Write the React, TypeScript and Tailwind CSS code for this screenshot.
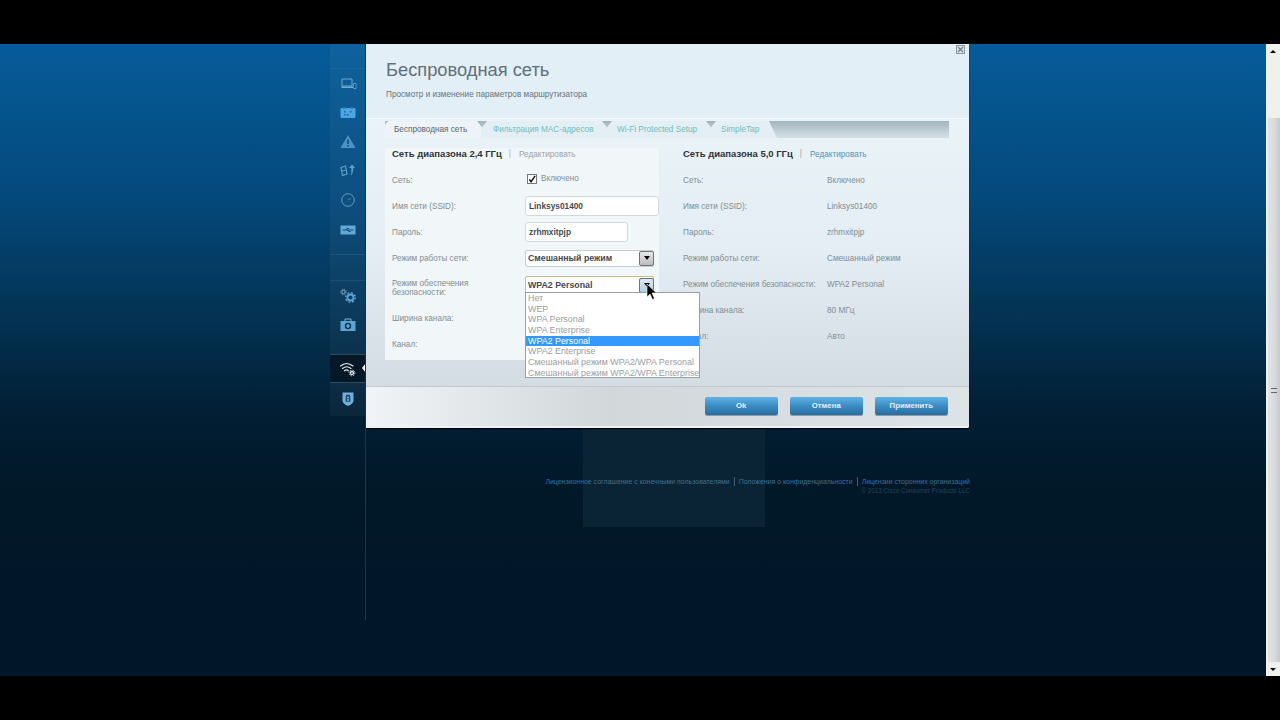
import React from 'react'

const font = { fontFamily: '"Liberation Sans", Arial, sans-serif' }

const Ico: React.FC<{ children: React.ReactNode }> = ({ children }) => (
  <svg width="18" height="18" viewBox="0 0 18 18" fill="#4aa5e2">
    {children}
  </svg>
)

const icons = [
  <Ico key="devices">
    <path d="M3 4h10v7H3z" fill="none" stroke="#6fa9cf" strokeWidth="1" />
    <path d="M1.500 11.500h12.500v1.500H3z" fill="#6fa9cf" />
    <path d="M14.500 8.500h2.500v5h-2.500z" fill="#0c4a7a" stroke="#6fa9cf" strokeWidth="0.800" />
  </Ico>,
  <Ico key="calendar">
    <path d="M1.500 5q0-1 1-1h13q1 0 1 1v8q0 1-1 1h-13q-1 0-1-1z" />
    <path d="M4 3h2.500v2H4zM11.500 3H14v2h-2.500z" fill="#2d79ad" />
    <path d="M5 7h1.500v1.500H5zM11 7h1.500v1.500H11zM8 10h1.500v1.500H8zM5 10h1.500v1.500H5z" fill="#1c639a" />
  </Ico>,
  <Ico key="alert">
    <path d="M9 2l7.500 13h-15z" fill="#4b93c6" />
    <path d="M8.300 6.500h1.400v4.500H8.300zM8.300 12h1.400v1.400H8.300z" fill="#123f63" />
  </Ico>,
  <Ico key="restore">
    <path d="M2 5.500l4.500-1.500 1.500 8-4.500 1.500z" fill="none" stroke="#5f9dc9" strokeWidth="1.200" />
    <path d="M3 9l4-1" stroke="#5f9dc9" strokeWidth="1" />
    <path d="M13 2.500l3.300 3.500h-2c0 3-.500 5.500-2.500 7.500 .6-2.500.8-5 .4-7.500H9.800z" fill="#5f9dc9" />
  </Ico>,
  <Ico key="clock">
    <circle cx="9" cy="9" r="6.300" fill="#0f4f7e" stroke="#5f9dc9" strokeWidth="1" />
    <path d="M9 9l2.500-1.500" stroke="#5f9dc9" strokeWidth="0.800" />
  </Ico>,
  <Ico key="usb">
    <path d="M1.500 4.500h15v9h-15z" fill="#62a9d8" />
    <path d="M3.500 9h11M6.500 9l1.500-1.500h2M8 9l1.500 1.500h2" fill="none" stroke="#134c78" strokeWidth="1" />
  </Ico>,
]

const GearIcon = () => (
  <Ico>
    <circle cx="4.500" cy="5" r="1.700" fill="none" stroke="#7fa8c4" strokeWidth="1" />
    <circle cx="4.500" cy="5" r="2.800" fill="none" stroke="#7fa8c4" strokeWidth="1" strokeDasharray="1.100 1.100" />
    <circle cx="11.500" cy="10.500" r="3" fill="none" stroke="#5aa5d5" strokeWidth="1.800" />
    <circle cx="11.500" cy="10.500" r="4.800" fill="none" stroke="#5aa5d5" strokeWidth="1.500" strokeDasharray="1.900 1.870" />
  </Ico>
)

const CaseIcon = () => (
  <Ico>
    <path d="M1.500 5h15v10h-15z" fill="#5aa5d5" />
    <path d="M6 5V3h6v2" fill="none" stroke="#7db5d8" strokeWidth="1" />
    <circle cx="9" cy="10" r="3.200" fill="#0f3555" />
    <path d="M8.400 8h1.200v1.400H11v1.200H9.600V12H8.400v-1.400H7V9.400h1.400z" fill="#7fc0e6" />
  </Ico>
)

const WifiIcon = () => (
  <svg width="18" height="18" viewBox="0 0 18 18" fill="none" stroke="#e4ecf1" strokeWidth="1.100" strokeLinecap="round">
    <path d="M1.500 6C5 2.800 10 2.800 14 6" />
    <path d="M3.500 8.500C6 6.400 9.500 6.400 12 8.500" />
    <path d="M5.500 10.800c1.300-1 3-1 4 0" />
    <circle cx="13" cy="13" r="1.500" strokeWidth="1.300" />
    <circle cx="13" cy="13" r="2.900" strokeWidth="1" strokeDasharray="1.150 1.150" strokeLinecap="butt" />
  </svg>
)

const ShieldIcon = () => (
  <svg width="18" height="18" viewBox="0 0 18 18">
    <path d="M3.500 2.500h11v8c0 2.500-2.800 4.500-5.500 5.500-2.700-1-5.500-3-5.500-5.500z" fill="#6fb0dc" />
    <path d="M9 4.500a2.300 2.300 0 0 1 2.300 2.300v5H6.700v-5A2.300 2.300 0 0 1 9 4.500z" fill="#1a4568" />
    <circle cx="9" cy="7.500" r="1" fill="#7fc0e6" />
    <circle cx="9" cy="10" r="1" fill="#7fc0e6" />
  </svg>
)

const Sidebar = () => (
  <div className="w-[36px] h-[372px] shrink-0 flex flex-col bg-white/[0.035] rounded-bl-[3px]">
    <div className="h-[25px] border-b border-[#2a6f9f]/60" />
    {icons.map((icon, i) => (
      <div key={i} className="h-[29.2px] flex items-center justify-center">
        {icon}
      </div>
    ))}
    <div className="h-[11px] border-b border-[#2a5f85]/60" />
    <div className="h-[26px] border-b border-[#24567a]/60" />
    <div className="h-[29px] flex items-center justify-center">
      <GearIcon />
    </div>
    <div className="h-[29px] flex items-center justify-center">
      <CaseIcon />
    </div>
    <div className="h-[15px]" />
    <div className="relative h-[28px] flex items-center justify-center bg-[#061726] border-t border-[#2b4a63]">
      <WifiIcon />
      <div className="absolute right-0 top-[8px] w-0 h-0 border-y-[5px] border-y-transparent border-r-[4px] border-r-white" />
    </div>
    <div className="h-[32px] flex items-center justify-center border-t border-[#2f4d66] rounded-bl-[3px]">
      <ShieldIcon />
    </div>
  </div>
)

const tabs = [
  { label: 'Беспроводная сеть', w: 'w-[98px]', text: 'text-[#59666e]', bg: 'bg-[#edf3f7]', clip: '[clip-path:polygon(0_0,calc(100%-6px)_0,100%_45%,100%_100%,0_100%)] rounded-tl-[5px] pl-[9px]' },
  { label: 'Фильтрация MAC-адресов', w: 'w-[127px]', text: 'text-[#6fbdb8]', bg: 'bg-[#e4eff5]', clip: '[clip-path:polygon(6px_0,calc(100%-6px)_0,100%_45%,100%_100%,0_100%,0_45%)] pl-[12px]' },
  { label: 'Wi-Fi Protected Setup', w: 'w-[106px]', text: 'text-[#6fbdb8]', bg: 'bg-[#e4eff5]', clip: '[clip-path:polygon(6px_0,calc(100%-6px)_0,100%_45%,100%_100%,0_100%,0_45%)] pl-[11px]' },
  { label: 'SimpleTap', w: 'w-[67px]', text: 'text-[#6fbdb8]', bg: 'bg-[#e4eff5]', clip: '[clip-path:polygon(6px_0,calc(100%-8px)_0,100%_100%,0_100%,0_45%)] pl-[11px]' },
]

const Arrow: React.FC<{ active?: boolean }> = ({ active }) => (
  <div
    className={`w-[15px] h-[15px] -mr-[1px] -mt-[1px] flex items-center justify-center border border-[#6e7478] rounded-[2px] bg-gradient-to-b ${
      active ? 'from-[#dcebf5] to-[#a9cfe6]' : 'from-[#e9e9e9] to-[#bcbcbc]'
    }`}
  >
    <div className="w-0 h-0 border-x-[3.500px] border-x-transparent border-t-[4px] border-t-black" />
  </div>
)

const Label: React.FC<{ children: React.ReactNode }> = ({ children }) => (
  <div className="text-[8.200px] leading-[9px] text-[#828d93]">{children}</div>
)

const LeftForm = () => (
  <div className="w-[274px] h-[212px] bg-[#f1f6f9] pl-[7px]">
    <div className="h-[13px] flex items-center mb-[6px]">
      <span className="text-[9.500px] font-bold text-[#2e3438]">Сеть диапазона 2,4 ГГц</span>
      <span className="ml-[7px] text-[8.200px] text-[#a0abb1]">|</span>
      <span className="ml-[8px] pt-[1px] text-[8.200px] text-[#9aa4aa]">Редактировать</span>
    </div>
    <div className="grid grid-cols-[133px_1fr] items-center">
      <div className="h-[26px] flex items-center"><Label>Сеть:</Label></div>
      <div className="h-[26px] flex items-center pl-[2px] pb-[2px]">
        <div className="w-[10px] h-[10px] border border-[#777] bg-white flex items-center justify-center">
          <svg width="9" height="9" viewBox="0 0 9 9" fill="none" stroke="#111" strokeWidth="1.600"><path d="M1.500 4.500l2 2.500L8 0.500" /></svg>
        </div>
        <span className="ml-[4px] pt-[1px] text-[8.200px] text-[#828d93]">Включено</span>
      </div>

      <div className="h-[26px] flex items-center"><Label>Имя сети (SSID):</Label></div>
      <div className="h-[26px] flex items-center">
        <div className="w-[134px] h-[20px] rounded-[3px] border border-[#d4d8da] bg-white pl-[3px] flex items-center text-[8.300px] font-bold text-[#444b50]">Linksys01400</div>
      </div>

      <div className="h-[26px] flex items-center"><Label>Пароль:</Label></div>
      <div className="h-[26px] flex items-center">
        <div className="w-[103px] h-[20px] rounded-[3px] border border-[#d4d8da] bg-white pl-[3px] flex items-center text-[8.300px] font-bold text-[#444b50]">zrhmxitpjp</div>
      </div>

      <div className="h-[26px] flex items-center"><Label>Режим работы сети:</Label></div>
      <div className="h-[26px] flex items-center">
        <div className="w-[129px] h-[17px] rounded-[2px] border border-[#c9ced1] bg-white pl-[2px] pt-[1px] flex items-center justify-between text-[8.800px] font-bold text-[#444b50]">
          Смешанный режим
          <Arrow />
        </div>
      </div>

      <div className="h-[34px] flex items-center"><Label>Режим обеспечения<br />безопасности:</Label></div>
      <div className="relative h-[34px] flex items-start pt-[5px]">
        <div className="w-[129px] h-[18px] rounded-[2px] border border-[#cbbd8e] bg-white pl-[2px] pt-[1px] flex items-center justify-between text-[8.800px] font-bold text-[#444b50]">
          WPA2 Personal
          <Arrow active />
        </div>
      </div>

      <div className="h-[26px] flex items-center"><Label>Ширина канала:</Label></div>
      <div className="h-[26px]" />
      <div className="h-[26px] flex items-center"><Label>Канал:</Label></div>
      <div className="h-[26px]" />
    </div>
  </div>
)

const rightRows: [string, string][] = [
  ['Сеть:', 'Включено'],
  ['Имя сети (SSID):', 'Linksys01400'],
  ['Пароль:', 'zrhmxitpjp'],
  ['Режим работы сети:', 'Смешанный режим'],
  ['Режим обеспечения безопасности:', 'WPA2 Personal'],
  ['Ширина канала:', '80 МГц'],
  ['Канал:', 'Авто'],
]

const RightForm = () => (
  <div className="ml-[24px] w-[266px]">
    <div className="h-[13px] flex items-center mb-[6px]">
      <span className="text-[9.500px] font-bold text-[#2e3438]">Сеть диапазона 5,0 ГГц</span>
      <span className="ml-[7px] text-[8.200px] text-[#8fa0aa]">|</span>
      <span className="ml-[8px] pt-[1px] text-[8.200px] text-[#5b91b8]">Редактировать</span>
    </div>
    <div className="grid grid-cols-[144px_1fr]">
      {rightRows.map(([k, v]) => (
        <React.Fragment key={k}>
          <div className="h-[26px] flex items-center whitespace-nowrap"><Label>{k}</Label></div>
          <div className="h-[26px] flex items-center"><Label>{v}</Label></div>
        </React.Fragment>
      ))}
    </div>
  </div>
)

const options = ['Нет', 'WEP', 'WPA Personal', 'WPA Enterprise', 'WPA2 Personal', 'WPA2 Enterprise', 'Смешанный режим WPA2/WPA Personal', 'Смешанный режим WPA2/WPA Enterprise']

const Dropdown = () => (
  <div className="absolute left-[159px] top-[173px] w-[175px] h-[86px] border border-[#9aa0a4] bg-white flex flex-col">
    {options.map(o => (
      <div
        key={o}
        className={`h-[10.700px] leading-[10.700px] pl-[2px] text-[8.900px] whitespace-nowrap ${
          o === 'WPA2 Personal' ? 'bg-[#3399ff] text-white' : 'text-[#999ea2]'
        }`}
      >
        {o}
      </div>
    ))}
  </div>
)

const Cursor = () => (
  <svg className="absolute left-[280px] top-[164px]" width="12" height="18" viewBox="0 0 12 18">
    <path d="M1 1v13l3-3 2.500 5.500 2-1L6 10h4.500z" fill="#000" stroke="#fff" strokeWidth="0.600" />
  </svg>
)

const Modal = () => (
  <div className="relative w-[603px] h-[384px] flex flex-col bg-[#e3eff6] rounded-br-[2px] shadow-[0_1px_1px_#000]">
    {/* close */}
    <div className="absolute right-[4px] top-[1px] w-[9px] h-[9px] border border-[#8b979e] flex items-center justify-center bg-[#dbe5ea]">
      <svg width="7" height="7" viewBox="0 0 7 7" stroke="#6f7c84" strokeWidth="1.200"><path d="M1 1l5 5M6 1L1 6" /></svg>
    </div>

    <div className="h-[75px] shrink-0 pl-[20px] pt-[15px] border-b border-[#f5f9fb]">
      <div className="text-[18.300px] leading-[22px] text-[#5f707a]">Беспроводная сеть</div>
      <div className="mt-[9px] text-[8.200px] leading-[10px] text-[#687479]">Просмотр и изменение параметров маршрутизатора</div>
    </div>

    <div className="relative flex-1 flex flex-col bg-gradient-to-b from-[#eaf3f8] via-[#e3edf3] to-[#d3dce2] pl-[19px]">
      <div className="mt-[2px] w-[564px] h-[17px] flex bg-gradient-to-b from-[#a4b4bd] to-[#d5e1e7]">
        {tabs.map(t => (
          <div key={t.label} className={`h-full flex items-center pt-[1px] whitespace-nowrap text-[8.200px] -mr-[2px] ${t.w} ${t.text} ${t.bg} ${t.clip}`}>
            {t.label}
          </div>
        ))}
      </div>
      <div className="mt-[10px] flex">
        <LeftForm />
        <RightForm />
      </div>
      <Dropdown />
      <Cursor />
    </div>

    <div className="h-[42px] shrink-0 border-t border-[#c0c9ce] border-b-2 border-b-[#eef2f4] rounded-br-[2px] bg-gradient-to-r from-[#f0f4f7] via-[#d2d7da] via-40% to-[#dde4e8] flex justify-end gap-[11.500px] pt-[10px] pr-[21px]">
      {['Ok', 'Отмена', 'Применить'].map(b => (
        <button
          key={b}
          className="w-[73.500px] h-[18px] rounded-[2px] bg-gradient-to-b from-[#5fb4e4] via-[#3a8cc4] to-[#2a6d9f] text-[7.800px] font-bold text-[#e2f0f8] shadow-[0_1px_0_#8b9ca8]"
        >
          {b}
        </button>
      ))}
    </div>
  </div>
)

const Footer = () => (
  <div className="mt-[49px] text-right">
    <div className="text-[6.950px] leading-[9px] text-[#3f6f96] flex justify-end">
      <span>Лицензионное соглашение с конечными пользователями</span>
      <span className="mx-[4px] w-px h-[9px] bg-[#3f5f78]" />
      <span>Положения о конфиденциальности</span>
      <span className="mx-[4px] w-px h-[9px] bg-[#3f5f78]" />
      <span>Лицензии сторонних организаций</span>
    </div>
    <div className="text-[6.300px] leading-[9px] text-[#25435a]">© 2013 Cisco Consumer Products LLC</div>
  </div>
)

const Scrollbar = () => (
  <div className="w-[14px] shrink-0 flex flex-col items-center bg-[#f1f1ec]">
    <div className="h-[74px] w-full relative flex justify-center pt-[6px]">
      <div className="w-0 h-0 border-x-[3px] border-x-transparent border-b-[3px] border-b-black" />
    </div>
    <div className="relative w-[12px] h-[544px] ml-[1px] bg-gradient-to-r from-[#e2e2e2] via-[#d9dcdf] to-[#c7cacd] flex items-center justify-center">
      <div className="w-[6px] h-[5px] border-y border-[#666]" />
    </div>
    <div className="flex-1 flex items-center justify-center">
      <div className="w-0 h-0 border-x-[3px] border-x-transparent border-t-[3px] border-t-black" />
    </div>
  </div>
)

export default function App() {
  return (
    <div className="w-[1280px] h-[720px] bg-black flex flex-col overflow-hidden" style={font}>
      <div className="h-[44px] shrink-0" />
      <div className="h-[632px] flex">
        <div className="flex-1 flex items-start pl-[330px] bg-[linear-gradient(180deg,#055c9a_0%,#04487a_25%,#03304f_45%,#021f35_58%,#011829_70%,#011628_100%)]">
          <Sidebar />
          <div className="relative w-[604px] h-[576px] shadow-[-1px_0_0_#0f3a58]">
            <div className="absolute left-[217px] top-[384px] w-[182px] h-[99px] bg-[#0b2435]" />
            <div className="relative">
              <Modal />
              <Footer />
            </div>
          </div>
        </div>
        <Scrollbar />
      </div>
      <div className="h-[44px] shrink-0" />
    </div>
  )
}
